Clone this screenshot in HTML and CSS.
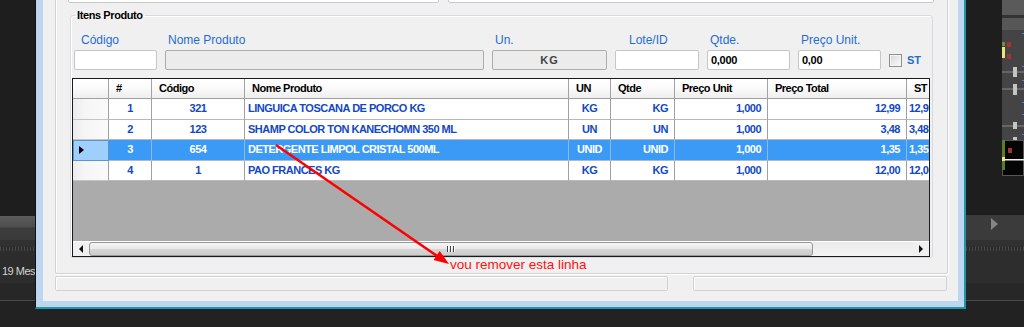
FILE: index.html
```html
<!DOCTYPE html>
<html lang="pt">
<head>
<meta charset="utf-8">
<title>Itens Produto</title>
<link rel="stylesheet" href="styles.css">
</head>
<body>
<div class="side side-left">
  <div class="side-top"></div>
  <div class="side-band"></div>
  <div class="side-strip"></div>
  <div class="side-dots"></div>
  <div class="side-tray"><span class="tray-text">19 Mes</span></div>
  <div class="side-tray2"></div>
  <div class="side-line"></div>
</div>

<div class="window">
  <div class="client">
    <div class="panel">
      <div class="top-fields">
        <div class="tf tf-a"></div>
        <div class="tf tf-b"></div>
      </div>
      <fieldset class="group">
        <legend>Itens Produto</legend>
        <div class="fields">
          <div class="field f-cod"><label>Código</label><div class="input"></div></div>
          <div class="field f-nome"><label>Nome Produto</label><div class="input off"></div></div>
          <div class="field f-un"><label>Un.</label><div class="input off center">KG</div></div>
          <div class="field f-lote"><label>Lote/ID</label><div class="input"></div></div>
          <div class="field f-qtd"><label>Qtde.</label><div class="input">0,000</div></div>
          <div class="field f-preco"><label>Preço Unit.</label><div class="input">0,00</div></div>
          <div class="chk-field"><span class="chk"></span><span class="chk-label">ST</span></div>
        </div>
        <div class="grid">
          <div class="row head">
            <div class="hc corner"></div>
            <div class="hc">#</div>
            <div class="hc">Código</div>
            <div class="hc">Nome Produto</div>
            <div class="hc">UN</div>
            <div class="hc">Qtde</div>
            <div class="hc">Preço Unit</div>
            <div class="hc">Preço Total</div>
            <div class="hc">ST</div>
          </div>
          <div class="row">
            <div class="rh"></div>
            <div class="dc c">1</div>
            <div class="dc c">321</div>
            <div class="dc l">LINGUICA TOSCANA DE PORCO KG</div>
            <div class="dc c">KG</div>
            <div class="dc r">KG</div>
            <div class="dc r">1,000</div>
            <div class="dc r">12,99</div>
            <div class="dc st">12,99</div>
          </div>
          <div class="row">
            <div class="rh"></div>
            <div class="dc c">2</div>
            <div class="dc c">123</div>
            <div class="dc l">SHAMP COLOR TON KANECHOMN 350 ML</div>
            <div class="dc c">UN</div>
            <div class="dc r">UN</div>
            <div class="dc r">1,000</div>
            <div class="dc r">3,48</div>
            <div class="dc st">3,48</div>
          </div>
          <div class="row sel">
            <div class="rh"><span class="cur"></span></div>
            <div class="dc c">3</div>
            <div class="dc c">654</div>
            <div class="dc l">DETERGENTE LIMPOL CRISTAL 500ML</div>
            <div class="dc c">UNID</div>
            <div class="dc r">UNID</div>
            <div class="dc r">1,000</div>
            <div class="dc r">1,35</div>
            <div class="dc st">1,35</div>
          </div>
          <div class="row">
            <div class="rh"></div>
            <div class="dc c">4</div>
            <div class="dc c">1</div>
            <div class="dc l">PAO FRANCES KG</div>
            <div class="dc c">KG</div>
            <div class="dc r">KG</div>
            <div class="dc r">1,000</div>
            <div class="dc r">12,00</div>
            <div class="dc st">12,00</div>
          </div>
          <div class="filler"></div>
          <div class="hscroll">
            <div class="sb-btn"><span class="arr-l"></span></div>
            <div class="sb-thumb"><span class="grip"><i></i><i></i><i></i></span></div>
            <div class="sb-track"></div>
            <div class="sb-btn"><span class="arr-r"></span></div>
          </div>
        </div>
      </fieldset>
    </div>
    <div class="status">
      <div class="st-box st-a"></div>
      <div class="st-box st-b"></div>
    </div>
  </div>
</div>

<div class="side side-right">
  <div class="rs-top">
    <div class="rs-gap"></div>
    <svg class="mixer" width="22" height="176" viewBox="0 0 22 176">
      <rect x="0" y="0" width="22" height="15" fill="#5a5a5a"/>
      <rect x="0" y="15" width="22" height="3" fill="#333"/>
      <rect x="0" y="18" width="22" height="12" fill="#575757"/>
      <rect x="0" y="30" width="22" height="110" fill="#444"/>
      <rect x="20" y="33" width="2" height="1" fill="#3d86d8"/>
      <rect x="20" y="66" width="2" height="1" fill="#3d86d8"/>
      <rect x="20" y="80" width="2" height="1" fill="#3d86d8"/>
      <rect x="20" y="102" width="2" height="1" fill="#3d86d8"/>
      <rect x="20" y="114" width="2" height="1" fill="#3d86d8"/>
      <rect x="20" y="134" width="2" height="1" fill="#3d86d8"/>
      <rect x="0" y="42" width="3" height="4" fill="#6f8f3a"/>
      <rect x="5" y="42" width="4" height="5" fill="#a33434"/>
      <rect x="5" y="54" width="4" height="5" fill="#a33434"/>
      <rect x="0" y="47" width="3" height="11" fill="#ece47a"/>
      <rect x="0" y="71" width="22" height="2" fill="#666"/>
      <rect x="11" y="67" width="4" height="10" fill="#c4c4c4"/>
      <rect x="0" y="88" width="22" height="2" fill="#666"/>
      <rect x="11" y="84" width="4" height="11" fill="#c4c4c4"/>
      <rect x="0" y="125" width="22" height="2" fill="#666"/>
      <rect x="11" y="122" width="4" height="7" fill="#c4c4c4"/>
      <rect x="11" y="137" width="4" height="7" fill="#c4c4c4"/>
      <rect x="0.5" y="140.5" width="21" height="35" fill="#050505" stroke="#555"/>
      <rect x="0" y="140" width="3" height="30" fill="#5c7c2a"/>
      <rect x="6" y="148" width="4" height="5" fill="#a33434"/>
      <rect x="3" y="159" width="19" height="1.5" fill="#eee"/>
      <rect x="0" y="157" width="3" height="4" fill="#ece47a"/>
    </svg>
  </div>
  <div class="rs-band"><span class="play"></span></div>
  <div class="side-strip"></div>
  <div class="side-dots"></div>
  <div class="rs-tray"></div>
  <div class="side-tray2"></div>
  <div class="side-line"></div>
</div>

<svg class="annot" width="1024" height="327" viewBox="0 0 1024 327">
  <line x1="276" y1="145" x2="440" y2="258" stroke="#ff0000" stroke-width="2.5"/>
  <polygon points="449,264 433.5,260 439.7,251" fill="#ff0000"/>
  <text x="450" y="269" class="annot-text">vou remover esta linha</text>
</svg>
</body>
</html>
```

FILE: styles.css
```css
* { box-sizing: border-box; }
html, body { margin: 0; padding: 0; }
body {
  width: 1024px;
  height: 327px;
  overflow: hidden;
  background: #222;
  display: flex;
  align-items: flex-start;
  position: relative;
  font-family: "Liberation Sans", Arial, sans-serif;
}

/* dark desktop strips */
.side { display: flex; flex-direction: column; height: 327px; flex: none; }
.side-left { width: 35px; }
.side-top { height: 216px; background: #1e1e1e; }
.side-band { height: 24px; background: linear-gradient(#5c5c5c, #4d4d4d 11px, #3c3c3c 12px, #3a3a3a); }
.side-strip { height: 7px; background: #313131; }
.side-dots { height: 4px; background: #2c2c2c repeating-linear-gradient(90deg, #474747 0 1px, transparent 1px 3px); }
.side-tray {
  height: 32px; background: #2c2c2c; color: #d4d4d4;
  font-size: 11px; line-height: 12px; padding: 14px 0 0 2px;
  letter-spacing: -0.5px;
  white-space: nowrap; overflow: hidden;
}
.side-tray2 { height: 17px; background: #272727; }
.side-line { height: 1px; background: #4a4a4a; }

.side-right { width: 58px; }
.rs-top { height: 215px; display: flex; background: #1e1e1e; }
.rs-gap { width: 36px; }
.mixer { display: block; }
.rs-band { height: 25px; background: #3b3b3b; padding: 3px 0 0 25px; }
.play {
  display: block; width: 0; height: 0;
  border-left: 7px solid #858585;
  border-top: 6px solid transparent;
  border-bottom: 6px solid transparent;
}
.rs-tray { height: 32px; background: #2d2d2d; }

/* window */
.window {
  flex: none;
  width: 931px;
  height: 309px;
  background: #bed6ef;
  border-left: 1px solid #111;
  border-right: 2px solid #1c97a8;
  border-bottom: 2px solid #1c97a8;
  padding: 0 6px 6px 7px;
}
.client {
  width: 915px;
  height: 301px;
  background: #f0f0f0;
  padding-left: 12px;
  overflow: hidden;
}
.panel {
  margin-top: -20px;
  width: 893px;
  height: 294px;
  border: 1px solid #d2d2d2;
  border-radius: 2px;
  box-shadow: inset 1px 1px 0 #fff, 1px 1px 0 #fff;
}
.top-fields { display: flex; gap: 9px; margin-left: 12px; }
.tf { height: 22px; background: #fff; border: 1px solid #cacaca; border-radius: 2px; }
.tf-a { width: 371px; }
.tf-b { width: 486px; }

.group {
  margin: 6px 0 0 14px;
  width: 863px;
  height: 249px;
  border: 1px solid #d5dbe0;
  border-radius: 3px;
  padding: 0 1px 1px;
  min-width: 0;
  box-shadow: inset 1px 1px 0 #fff;
}
.group legend {
  margin-left: 3px;
  padding: 0 2px;
  font: bold 11px/13px "Liberation Sans", Arial, sans-serif;
  letter-spacing: -0.4px;
  color: #000;
}

.fields { display: flex; gap: 8px; margin-top: 10px; padding-left: 2px; }
.field { display: flex; flex-direction: column; gap: 2px; }
.field label {
  height: 16px; font-size: 12px; line-height: 16px;
  color: #1f6dd0; padding-left: 3px; white-space: nowrap;
}
.f-cod label { padding-left: 7px; }
.f-lote label { padding-left: 14px; }
.input {
  height: 20px; background: #fff;
  border: 1px solid #c6c6c6; border-radius: 2px;
  font: bold 11px/18px "Liberation Sans", Arial, sans-serif;
  letter-spacing: -0.3px;
  color: #000; padding-left: 3px;
}
.input.off { background: #ececec; border-color: #adadad; }
.input.center { text-align: center; padding-left: 0; color: #444; letter-spacing: 1px; }
.f-cod { width: 83px; }
.f-nome { width: 319px; }
.f-un { width: 115px; }
.f-lote { width: 84px; }
.f-qtd { width: 83px; }
.f-preco { width: 83px; }
.chk-field { display: flex; align-items: center; gap: 5px; align-self: flex-end; height: 20px; }
.chk {
  display: block; width: 13px; height: 13px;
  border: 1px solid #8e8f8f;
  background: linear-gradient(135deg, #d8d8d8, #fbfbfb);
  box-shadow: inset 0 0 0 1px #f4f4f4;
}
.chk-label {
  font: bold 11px/14px "Liberation Sans", Arial, sans-serif;
  color: #1f6dd0;
}

/* data grid */
.grid {
  margin-top: 8px;
  width: 858px;
  height: 179px;
  border: 1px solid #1b1b1b;
  display: flex;
  flex-direction: column;
  overflow: hidden;
  background: #ababab;
}
.row {
  flex: none;
  display: grid;
  grid-template-columns: 36px 43px 93px 324px 42px 64px 93px 139px 36px;
  font: bold 11px/19px "Liberation Sans", Arial, sans-serif;
  letter-spacing: -0.5px;
}
.hc {
  height: 20px;
  background: linear-gradient(#ffffff, #fbfbfb 45%, #eeeeee);
  border-right: 1px solid #a3a3a3;
  border-bottom: 1px solid #a0a0a0;
  color: #000;
  padding-left: 7px;
  white-space: nowrap;
  overflow: hidden;
}
.dc {
  height: 20.5px;
  background: #fff;
  border-right: 1px solid #a0a0a0;
  border-bottom: 1px solid #b8b8b8;
  color: #1248c4;
  padding: 0 6px;
  white-space: nowrap;
  overflow: hidden;
}
.dc.c { text-align: center; padding: 0; }
.dc.l { padding-left: 3px; }
.dc.r { text-align: right; }
.dc.st { text-align: left; padding: 0 0 0 2px; border-right: 0; }
.rh {
  height: 20.5px;
  background: linear-gradient(90deg, #ececec, #f6f6f6 35%, #fafafa);
  border-right: 1px solid #a0a0a0;
  border-bottom: 1px solid #c4c4c4;
  display: flex;
  align-items: center;
  padding-left: 6px;
}
.sel .dc { background: #3b9af6; color: #fff; border-right-color: #8fb9e4; }
.sel .rh { background: #9fd0fd; border: 1px solid #5f93cc; padding-left: 5px; }
.cur {
  display: block; width: 0; height: 0;
  border-left: 5px solid #000;
  border-top: 4px solid transparent;
  border-bottom: 4px solid transparent;
}
.filler { flex: 1; background: #ababab; }

.hscroll {
  flex: none;
  height: 15px;
  display: flex;
  background: #f0f0f0;
  border-top: 1px solid #fff;
}
.sb-btn {
  width: 16px;
  display: flex;
  align-items: center;
  justify-content: center;
  background: #f0f0f0;
}
.arr-l, .arr-r { display: block; width: 0; height: 0; border-top: 4px solid transparent; border-bottom: 4px solid transparent; }
.arr-l { border-right: 4px solid #111; }
.arr-r { border-left: 4px solid #111; }
.sb-thumb {
  width: 724px;
  border: 1px solid #979797;
  border-radius: 3px;
  background: linear-gradient(#f6f6f6, #e8e8e8 50%, #d6d6d6 51%, #cdcdcd);
  display: flex;
  align-items: center;
  justify-content: center;
}
.grip { display: flex; gap: 1px; }
.grip i { display: block; width: 1px; height: 6px; background: #444; box-shadow: 1px 0 0 #fff; margin-right: 1px; }
.sb-track { flex: 1; background: linear-gradient(#ebebeb, #f4f4f4); }

/* status bar */
.status { display: flex; gap: 25px; margin-top: 2px; }
.st-box { height: 15px; border: 1px solid #d2d2d2; border-radius: 2px; box-shadow: inset 1px 1px 0 #fff; }
.st-a { width: 613px; }
.st-b { width: 254px; }

/* annotation overlay */
.annot { position: absolute; left: 0; top: 0; pointer-events: none; }
.annot-text { font-family: "Liberation Sans", Arial, sans-serif; font-size: 13.5px; fill: #ff1010; }
```
